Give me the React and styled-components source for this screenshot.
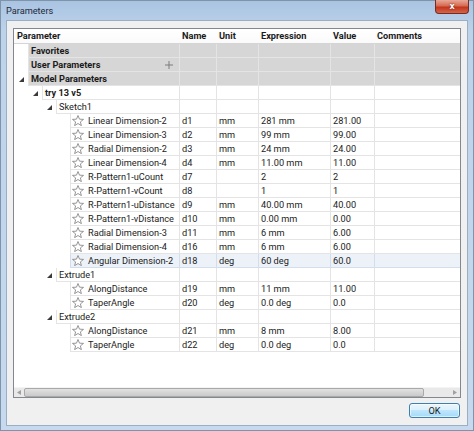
import React from 'react'
import styled, { createGlobalStyle } from 'styled-components'

const GlobalStyle = createGlobalStyle`
  html, body { margin: 0; padding: 0; background: #ffffff; }
  body { font-family: Roboto, "Open Sans", "Liberation Sans", sans-serif; color: #1b1b1b; }
`

const COLS = '165px 37px 42px 72px 44px 1fr'
const LINE = '#e4e4e4'
const FONT = '9.2px'

const Window = styled.div`
  width: 474px;
  height: 431px;
  box-sizing: border-box;
  display: flex;
  flex-direction: column;
  border: 1px solid #7f93aa;
  background: linear-gradient(#a9c4e2, #bdd3ea 30px, #c6d9ee);
`

const TitleBar = styled.div`
  height: 19px;
  display: flex;
  justify-content: space-between;
  align-items: flex-start;
  padding: 0 4px 0 5px;
`

const Title = styled.span`
  font-size: ${FONT};
  line-height: 19px;
  color: #1e2a3a;
`

const CloseButton = styled.div`
  width: 34px;
  height: 14px;
  margin-top: -1px;
  box-sizing: border-box;
  border: 1px solid #7b2a20;
  border-top: none;
  border-radius: 0 0 4px 4px;
  background: linear-gradient(#e8a898, #d66a52 45%, #c3351c 55%, #d2664c);
  color: #ffffff;
  font-family: "DejaVu Sans", sans-serif;
  font-weight: bold;
  font-size: 8px;
  line-height: 13px;
  text-align: center;
  text-shadow: 0 0 2px #6a1a10;
`

const Body = styled.div`
  flex: 1;
  margin: 0 5px 4px 5px;
  border: 1px solid #9aaec4;
  background: #f0f0f0;
  padding: 7px 6px 0 6px;
  display: flex;
  flex-direction: column;
`

const Table = styled.div`
  height: 370px;
  box-sizing: border-box;
  border: 1px solid #828790;
  background: #ffffff;
  display: flex;
  flex-direction: column;
`

const HeaderRow = styled.div`
  display: grid;
  grid-template-columns: ${COLS};
  height: 15px;
  box-sizing: border-box;
  border-bottom: 1px solid #d5d5d5;
  background: linear-gradient(#ffffff, #fafafa);
`

const HeaderCell = styled.div`
  font-size: ${FONT};
  font-weight: bold;
  line-height: 14px;
  padding-left: 3px;
  white-space: nowrap;
  overflow: hidden;
`

const Rows = styled.div`
  flex: 1;
`

const Row = styled.div`
  display: grid;
  grid-template-columns: ${COLS};
  height: 14px;
`

const TreeCell = styled.div`
  display: flex;
  min-width: 0;
`

const Indent = styled.div`
  width: ${p => p.$width}px;
  flex: none;
  display: flex;
  justify-content: flex-end;
  background: #ffffff;
`

const ExpanderSlot = styled.div`
  width: 14px;
  display: flex;
  align-items: center;
  justify-content: center;
`

const Label = styled.div`
  flex: 1;
  min-width: 0;
  display: flex;
  align-items: center;
  position: relative;
  box-sizing: border-box;
  border-left: 1px solid ${p => p.$border || LINE};
  border-bottom: 1px solid ${p => p.$border || LINE};
  background: ${p => p.$bg};
  padding-left: ${p => p.$pad}px;
  font-size: ${FONT};
  font-weight: ${p => (p.$bold ? 'bold' : 'normal')};
  white-space: nowrap;
`

const Cell = styled.div`
  box-sizing: border-box;
  border-left: 1px solid ${p => p.$border || LINE};
  border-bottom: 1px solid ${p => p.$border || LINE};
  background: ${p => p.$bg};
  padding-left: 2px;
  font-size: ${FONT};
  line-height: 13px;
  white-space: nowrap;
  overflow: hidden;
`

const StarBox = styled.span`
  display: flex;
  margin-right: 4px;
`

const PlusMark = styled.span`
  position: absolute;
  right: 6px;
  top: 3px;
  display: flex;
`

const Scrollbar = styled.div`
  height: 9px;
  display: flex;
  background: #e9e9e9;
  border-top: 1px solid #f4f4f4;
`

const ScrollArrow = styled.div`
  width: 10px;
  display: flex;
  align-items: center;
  justify-content: center;
`

const Thumb = styled.div`
  width: ${p => p.$width}px;
  box-sizing: border-box;
  border: 1px solid #a9a9a9;
  border-radius: 2px;
  background: linear-gradient(#e2e2e2, #c9c9c9);
`

const Track = styled.div`
  flex: 1;
`

const Footer = styled.div`
  display: flex;
  justify-content: flex-end;
  padding-top: 5px;
`

const OkButton = styled.button`
  width: 51px;
  height: 15px;
  padding: 0;
  margin-right: 1px;
  border: 1px solid #3c7fb1;
  border-radius: 3px;
  background: linear-gradient(#eaf6fd, #d9f0fc 50%, #bee6fd 50%, #a7d9f5);
  box-shadow: inset 0 0 0 1px rgba(255, 255, 255, 0.6);
  font-family: Roboto, "Open Sans", sans-serif;
  font-size: ${FONT};
  color: #1b1b1b;
`

const Triangle = () => (
  <svg width="5" height="5" viewBox="0 0 5 5">
    <polygon points="5,0 5,5 0,5" fill="#3a3a3a" />
  </svg>
)

const Star = () => (
  <svg width="12" height="11" viewBox="0 0 24 22">
    <polygon
      points="12,1 15,8.3 23,8.8 16.8,13.8 18.8,21.3 12,17 5.2,21.3 7.2,13.8 1,8.8 9,8.3"
      fill="#ffffff"
      stroke="#7c7c7c"
      strokeWidth="1.6"
      strokeLinejoin="round"
    />
  </svg>
)

const Plus = () => (
  <svg width="8" height="8" viewBox="0 0 8 8">
    <path d="M4 0V8M0 4H8" stroke="#7d7d7d" strokeWidth="1" />
  </svg>
)

const SmallArrow = ({ dir }) => (
  <svg width="4" height="5" viewBox="0 0 4 5">
    <polygon points={dir === 'left' ? '4,0 4,5 0,2.5' : '0,0 0,5 4,2.5'} fill="#a0a0a0" />
  </svg>
)

const rows = [
  { kind: 'group', level: 0, label: 'Favorites' },
  { kind: 'group', level: 0, label: 'User Parameters', plus: true },
  { kind: 'group', level: 0, label: 'Model Parameters', open: true },
  { kind: 'node', level: 1, label: 'try 13 v5', open: true, bold: true },
  { kind: 'node', level: 2, label: 'Sketch1', open: true },
  { kind: 'leaf', level: 3, label: 'Linear Dimension-2', name: 'd1', unit: 'mm', expr: '281 mm', value: '281.00' },
  { kind: 'leaf', level: 3, label: 'Linear Dimension-3', name: 'd2', unit: 'mm', expr: '99 mm', value: '99.00' },
  { kind: 'leaf', level: 3, label: 'Radial Dimension-2', name: 'd3', unit: 'mm', expr: '24 mm', value: '24.00' },
  { kind: 'leaf', level: 3, label: 'Linear Dimension-4', name: 'd4', unit: 'mm', expr: '11.00 mm', value: '11.00' },
  { kind: 'leaf', level: 3, label: 'R-Pattern1-uCount', name: 'd7', unit: '', expr: '2', value: '2' },
  { kind: 'leaf', level: 3, label: 'R-Pattern1-vCount', name: 'd8', unit: '', expr: '1', value: '1' },
  { kind: 'leaf', level: 3, label: 'R-Pattern1-uDistance', name: 'd9', unit: 'mm', expr: '40.00 mm', value: '40.00' },
  { kind: 'leaf', level: 3, label: 'R-Pattern1-vDistance', name: 'd10', unit: 'mm', expr: '0.00 mm', value: '0.00' },
  { kind: 'leaf', level: 3, label: 'Radial Dimension-3', name: 'd11', unit: 'mm', expr: '6 mm', value: '6.00' },
  { kind: 'leaf', level: 3, label: 'Radial Dimension-4', name: 'd16', unit: 'mm', expr: '6 mm', value: '6.00' },
  { kind: 'leaf', level: 3, label: 'Angular Dimension-2', name: 'd18', unit: 'deg', expr: '60 deg', value: '60.0', selected: true },
  { kind: 'node', level: 2, label: 'Extrude1', open: true },
  { kind: 'leaf', level: 3, label: 'AlongDistance', name: 'd19', unit: 'mm', expr: '11 mm', value: '11.00' },
  { kind: 'leaf', level: 3, label: 'TaperAngle', name: 'd20', unit: 'deg', expr: '0.0 deg', value: '0.0' },
  { kind: 'node', level: 2, label: 'Extrude2', open: true },
  { kind: 'leaf', level: 3, label: 'AlongDistance', name: 'd21', unit: 'mm', expr: '8 mm', value: '8.00' },
  { kind: 'leaf', level: 3, label: 'TaperAngle', name: 'd22', unit: 'deg', expr: '0.0 deg', value: '0.0' },
]

function ParamRow({ row }) {
  const bg = row.kind === 'group' ? '#d6d6d6' : row.selected ? '#edf2f9' : '#ffffff'
  const border = row.selected ? '#d3deec' : LINE
  const bold = row.kind === 'group' || row.bold
  return (
    <Row>
      <TreeCell>
        <Indent $width={14 + row.level * 14}>
          <ExpanderSlot>{row.open && <Triangle />}</ExpanderSlot>
        </Indent>
        <Label $bg={bg} $border={border} $bold={bold} $pad={row.kind === 'leaf' ? 1 : 2}>
          {row.kind === 'leaf' && (
            <StarBox>
              <Star />
            </StarBox>
          )}
          {row.label}
          {row.plus && (
            <PlusMark>
              <Plus />
            </PlusMark>
          )}
        </Label>
      </TreeCell>
      <Cell $bg={bg} $border={border}>{row.name}</Cell>
      <Cell $bg={bg} $border={border}>{row.unit}</Cell>
      <Cell $bg={bg} $border={border}>{row.expr}</Cell>
      <Cell $bg={bg} $border={border}>{row.value}</Cell>
      <Cell $bg={bg} $border={border} />
    </Row>
  )
}

export default function App() {
  return (
    <>
      <GlobalStyle />
      <Window>
        <TitleBar>
          <Title>Parameters</Title>
          <CloseButton>x</CloseButton>
        </TitleBar>
        <Body>
          <Table>
            <HeaderRow>
              <HeaderCell>Parameter</HeaderCell>
              <HeaderCell>Name</HeaderCell>
              <HeaderCell>Unit</HeaderCell>
              <HeaderCell>Expression</HeaderCell>
              <HeaderCell>Value</HeaderCell>
              <HeaderCell>Comments</HeaderCell>
            </HeaderRow>
            <Rows>
              {rows.map((row, i) => (
                <ParamRow key={i} row={row} />
              ))}
            </Rows>
            <Scrollbar>
              <ScrollArrow>
                <SmallArrow dir="left" />
              </ScrollArrow>
              <Thumb $width={400} />
              <Track />
              <ScrollArrow>
                <SmallArrow dir="right" />
              </ScrollArrow>
            </Scrollbar>
          </Table>
          <Footer>
            <OkButton>OK</OkButton>
          </Footer>
        </Body>
      </Window>
    </>
  )
}
